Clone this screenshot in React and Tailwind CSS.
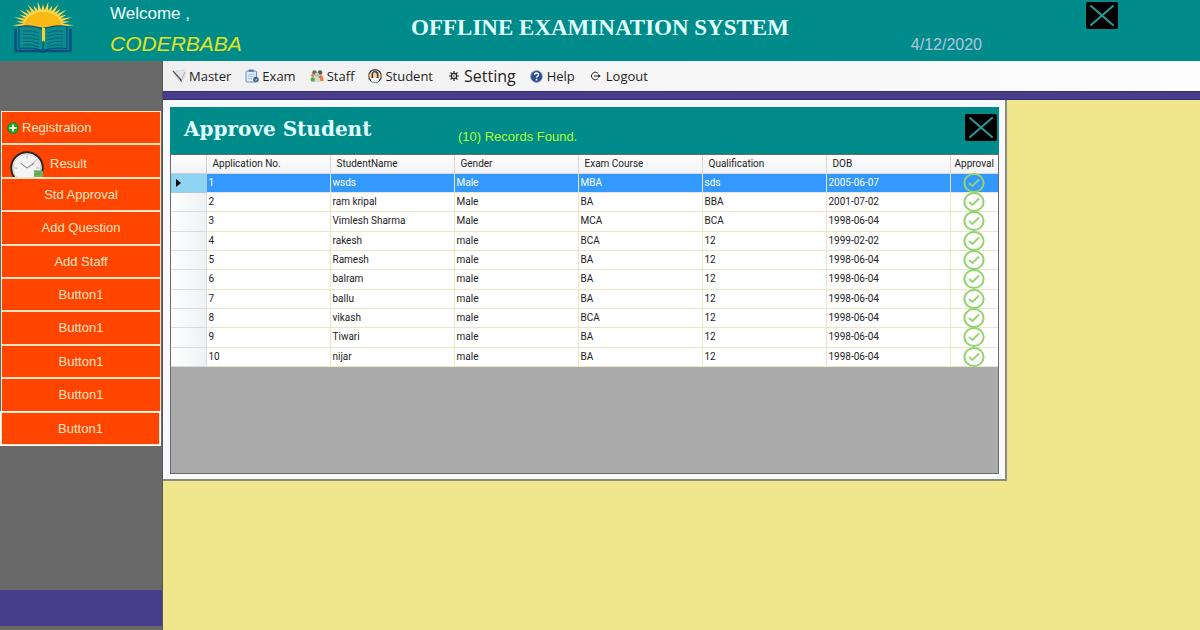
// src/App.jsx

const STUDENTS = [
  { id: 1, name: "wsds", gender: "Male", course: "MBA", qualification: "sds", dob: "2005-06-07" },
  { id: 2, name: "ram kripal", gender: "Male", course: "BA", qualification: "BBA", dob: "2001-07-02" },
  { id: 3, name: "Vimlesh Sharma", gender: "Male", course: "MCA", qualification: "BCA", dob: "1998-06-04" },
  { id: 4, name: "rakesh", gender: "male", course: "BCA", qualification: "12", dob: "1999-02-02" },
  { id: 5, name: "Ramesh", gender: "male", course: "BA", qualification: "12", dob: "1998-06-04" },
  { id: 6, name: "balram", gender: "male", course: "BA", qualification: "12", dob: "1998-06-04" },
  { id: 7, name: "ballu", gender: "male", course: "BA", qualification: "12", dob: "1998-06-04" },
  { id: 8, name: "vikash", gender: "male", course: "BCA", qualification: "12", dob: "1998-06-04" },
  { id: 9, name: "Tiwari", gender: "male", course: "BA", qualification: "12", dob: "1998-06-04" },
  { id: 10, name: "nijar", gender: "male", course: "BA", qualification: "12", dob: "1998-06-04" },
];

const COLUMNS = ["Application No.", "StudentName", "Gender", "Exam Course", "Qualification", "DOB"];

// Alternating long and short rays over the top half of the sun
const SUN_RAYS = Array.from({ length: 39 }, (_, i) => {
  const angle = Math.PI * (1.03 - (i * 1.06) / 38);
  const outer = i % 4 === 1 ? 1 : 0.88;
  const r = i % 2 ? outer : 0.62;
  return `${(31 + 31 * r * Math.cos(angle)).toFixed(1)},${(24 - 24 * r * Math.sin(angle)).toFixed(1)}`;
}).join(" ");

/* ────── Icons ────── */
function LogoIcon() {
  return (
    <svg width="62" height="52" viewBox="0 0 62 52" aria-hidden="true">
      <polygon points={SUN_RAYS} fill="#fbd54a" />
      <path d="M12 26a19 15 0 0 1 38 0z" fill="#fdb913" />
      <path d="M3.500 28v22h25q2.500 1.200 5 0h25V28" fill="#0b8793" stroke="#0b4f7d" strokeWidth="2.500" />
      <path d="M7 25.500q14-2 24 3 10-5 24-3v22q-14-1.500-24 2-10-3.500-24-2z" fill="#0c8c8c" stroke="#0b4f7d" strokeWidth="1.200" />
      <path d="M31 28v21" stroke="#0b4f7d" strokeWidth="1.200" />
      <g fill="none" stroke="#0b5f7d" strokeWidth=".9">
        <path d="M11 30q9-1 16 2M11 33.500q9-1 16 2M11 37q9-1 16 2M11 40.500q9-1 16 2M11 44q9-1 16 2" />
        <path d="M51 30q-9-1-16 2M51 33.500q-9-1-16 2M51 37q-9-1-16 2M51 40.500q-9-1-16 2M51 44q-9-1-16 2" />
      </g>
      <path d="M30 26l3 1v14l-1.500-1.500L30 41z" fill="#f5d330" />
    </svg>
  );
}

function CloseIcon() {
  return (
    <svg width="32" height="27" viewBox="0 0 32 27" aria-hidden="true">
      <path d="M5 4L27 23M27 4L5 23" stroke="#2a9a9a" strokeWidth="2" strokeLinecap="round" />
    </svg>
  );
}

function MasterIcon() {
  return (
    <svg width="14" height="14" viewBox="0 0 14 14" aria-hidden="true">
      <path d="M4 2l8-1 1 7-5 5-4-5z" fill="#e4e4e4" stroke="#bbb" strokeWidth=".6" strokeDasharray="1 1" />
      <path d="M1 2l8 9" stroke="#555" strokeWidth="1.300" />
      <path d="M9 12l4-9" stroke="#aaa" strokeWidth=".9" />
      <path d="M8 10l1.500 2.500" stroke="#222" strokeWidth="1" />
    </svg>
  );
}

function ExamIcon() {
  return (
    <svg width="14" height="14" viewBox="0 0 14 14" aria-hidden="true">
      <rect x="1" y="2" width="10.500" height="11" rx="1" fill="#dfeaf7" stroke="#6d8fbd" />
      <rect x="3.500" y=".5" width="5.500" height="2.500" rx="1" fill="#5c82b5" />
      <path d="M3 5.500h6.500M3 7.500h6.500M3 9.500h4" stroke="#a7bfdc" strokeWidth=".8" />
      <circle cx="11" cy="10.500" r="2.800" fill="#41658f" />
      <path d="M9.800 10.500l1 1 1.600-2" fill="none" stroke="#dfeaf7" strokeWidth=".8" />
    </svg>
  );
}

function StaffIcon() {
  return (
    <svg width="14" height="14" viewBox="0 0 14 14" aria-hidden="true">
      <circle cx="4.500" cy="3.500" r="2.300" fill="#6f6a4c" />
      <circle cx="10" cy="3.500" r="2.300" fill="#4f5f50" />
      <path d="M7.500 12q0-6 3-6t3 6z" fill="#ee7546" />
      <circle cx="2.800" cy="6.500" r="1.800" fill="#d98a5a" />
      <circle cx="7" cy="6" r="2.400" fill="#b9c8b5" />
      <path d="M3.500 13q0-5 3.500-5t3.500 5z" fill="#cfe0d0" />
      <circle cx="2.800" cy="10.500" r="2.200" fill="#4cae4c" />
    </svg>
  );
}

function StudentIcon() {
  return (
    <svg width="14" height="14" viewBox="0 0 14 14" aria-hidden="true">
      <circle cx="7" cy="7" r="6.300" fill="#e9e5dc" stroke="#28384d" strokeWidth="1.200" />
      <path d="M3.500 9V5.500q0-3.500 3.500-3.500t3.500 3.500V9z" fill="#4d3524" />
      <path d="M7 3.500q2 0 2 3T7 10 5 6.500t2-3z" fill="#f2cfa6" />
      <path d="M3 12q1-3.500 4-3.500t4 3.500q-4 3-8 0z" fill="#f7f7f7" />
      <path d="M1 5v4M13 5v4" stroke="#d98c32" strokeWidth="1.400" />
    </svg>
  );
}

function SettingIcon() {
  return (
    <svg width="10" height="10" viewBox="0 0 10 10" aria-hidden="true" fill="none" stroke="#222">
      <circle cx="5" cy="5" r="2.600" strokeWidth="1.100" />
      <circle cx="5" cy="5" r=".8" fill="#222" stroke="none" />
      <path d="M5 0v2M5 8v2M0 5h2M8 5h2M1.500 1.500l1.400 1.400M7.100 7.100l1.400 1.400M8.500 1.500L7.100 2.900M2.900 7.100L1.500 8.500" strokeWidth="1.200" />
    </svg>
  );
}

function HelpIcon() {
  return (
    <svg width="13" height="13" viewBox="0 0 13 13" aria-hidden="true">
      <circle cx="6.500" cy="6.500" r="5.900" fill="#2f4f8f" stroke="#8ea1c5" strokeWidth=".8" />
      <path d="M4.500 5q0-2 2-2t2 1.800q0 1-1 1.500t-1 1.500" fill="none" stroke="#fff" strokeWidth="1.400" />
      <circle cx="6.500" cy="9.700" r=".9" fill="#fff" />
    </svg>
  );
}

function LogoutIcon() {
  return (
    <svg width="11" height="10" viewBox="0 0 11 10" aria-hidden="true" fill="none" stroke="#222">
      <path d="M7.800 2.200a3.800 3.800 0 1 0 0 5.600" strokeWidth="1" />
      <path d="M4 5h5" strokeWidth="1" />
      <path d="M8.200 3l2.500 2-2.500 2z" fill="#222" stroke="none" />
    </svg>
  );
}

function PlusIcon() {
  return (
    <svg width="12" height="12" viewBox="0 0 12 12" aria-hidden="true">
      <circle cx="6" cy="6" r="5.600" fill="#21a121" stroke="#157a15" strokeWidth=".6" />
      <path d="M6 2.500v7M2.500 6h7" stroke="#f4fff0" strokeWidth="2" />
    </svg>
  );
}

function ClockIcon() {
  return (
    <svg width="34" height="26" viewBox="0 0 34 26" aria-hidden="true">
      <circle cx="17" cy="17" r="15.800" fill="#f4f4f4" stroke="#33241f" strokeWidth="2" />
      <circle cx="17" cy="17" r="13.800" fill="none" stroke="#d5d5d5" />
      <path d="M17 4.500v3M4.500 17h3M26.500 17h3" stroke="#999" strokeWidth=".8" />
      <path d="M17 17l-6-4.500M17 17l7-4.500" stroke="#666" strokeWidth=".9" />
      <path d="M17 17L27 8.500" stroke="#d99" strokeWidth=".7" />
      <rect x="24" y="20" width="9" height="6" fill="#6fb562" />
      <path d="M24 20h7M25 23h6" stroke="#57984e" />
    </svg>
  );
}

function ApproveIcon() {
  return (
    <svg width="22" height="20" viewBox="0 0 22 20" aria-hidden="true" fill="none" stroke="#92d36e">
      <ellipse cx="11" cy="10" rx="9.600" ry="9" strokeWidth="2" />
      <path d="M6 10l3.500 3L16 6.500" strokeWidth="1.800" />
    </svg>
  );
}

const MENU = [
  { label: "Master", Icon: MasterIcon },
  { label: "Exam", Icon: ExamIcon },
  { label: "Staff", Icon: StaffIcon },
  { label: "Student", Icon: StudentIcon },
  { label: "Setting", Icon: SettingIcon, large: true },
  { label: "Help", Icon: HelpIcon },
  { label: "Logout", Icon: LogoutIcon },
];

const SIDE_BUTTONS = [
  "Std Approval",
  "Add Question",
  "Add Staff",
  "Button1",
  "Button1",
  "Button1",
  "Button1",
];

function SideButton({ children, className = "justify-center" }) {
  return (
    <button
      className={`flex min-h-0 flex-1 items-center overflow-hidden border border-[#ffe4c4] bg-[#ff4500] text-[13px] text-[#ffe4c4] ${className}`}
    >
      {children}
    </button>
  );
}

function Header() {
  return (
    <header className="grid h-[61px] grid-cols-[1fr_auto_1fr] bg-[#008b8b]">
      <div className="flex gap-9 pl-3">
        <div className="pt-px">
          <LogoIcon />
        </div>
        <div className="pt-1">
          <p className="text-[17px] leading-5 text-[#f0ffff]">Welcome ,</p>
          <p className="pt-2 text-[21px] leading-6 text-[#e3e31c] italic">CODERBABA</p>
        </div>
      </div>
      <h1 className="pt-3 font-['Liberation_Serif',serif] text-[23px] leading-8 font-bold text-[#e0ffff]">
        OFFLINE EXAMINATION SYSTEM
      </h1>
      <div className="flex items-start justify-end gap-[104px] pt-[2px] pr-[82px]">
        <p className="self-end pb-[6px] text-base leading-5 text-[#b0c4de]">4/12/2020</p>
        <button aria-label="Close application" className="rounded-xs bg-black">
          <CloseIcon />
        </button>
      </div>
    </header>
  );
}

function Sidebar() {
  return (
    <aside className="flex w-[163px] shrink-0 flex-col border-r border-[#555] bg-[#696969] pt-[50px]">
      <div className="ml-px flex h-[334px] w-[160px] flex-col">
        <SideButton className="gap-[3px] pl-[5px]">
          <PlusIcon />
          Registration
        </SideButton>
        <SideButton className="gap-[6px] pl-2">
          <span className="self-end">
            <ClockIcon />
          </span>
          <span className="pt-[5px]">Result</span>
        </SideButton>
        {SIDE_BUTTONS.map((label, i) => (
          <SideButton key={i}>{label}</SideButton>
        ))}
        <SideButton className="mr-px justify-center outline-1 outline-white">Button1</SideButton>
      </div>
      <div className="mt-auto mb-1 h-9 bg-[#483d8b]" />
    </aside>
  );
}

function MenuBar() {
  return (
    <nav className="flex h-[30px] items-center gap-[13px] bg-linear-to-r from-[#f0f0f0] to-[#fdfdfd] pl-2 font-['Open_Sans',sans-serif] text-[13px] text-[#1e1e1e]">
      {MENU.map(({ label, Icon, large }) => (
        <button key={label} className="flex items-center gap-[2px]">
          <span className="flex w-4 justify-center">
            <Icon />
          </span>
          <span className={large ? "text-base leading-5" : "leading-5"}>{label}</span>
        </button>
      ))}
    </nav>
  );
}

function StudentTable() {
  return (
    <table className="h-[212px] w-full table-fixed border-collapse text-left font-['Roboto',sans-serif] text-[10px] leading-3 text-[#222]">
      <colgroup>
        <col className="w-[35px]" />
        {COLUMNS.map((c) => (
          <col key={c} />
        ))}
        <col className="w-12" />
      </colgroup>
      <thead>
        <tr className="h-[18px] bg-linear-to-b from-white to-[#f1f2f4]">
          <th className="border-r border-b border-[#cfcfcf] p-0" />
          {COLUMNS.map((c) => (
            <th key={c} className="border-r border-b border-[#d8d8d8] p-0 pl-[6px] font-normal">
              {c}
            </th>
          ))}
          <th className="border-b border-[#d8d8d8] p-0 text-center font-normal">Approval</th>
        </tr>
      </thead>
      <tbody>
        {STUDENTS.map((s, i) => (
          <tr key={s.id} className={i === 0 ? "bg-[#3399ff] text-white" : "bg-white"}>
            <td
              className={
                i === 0
                  ? "border-r border-b border-[#a9c9dd] bg-[#8fd3f3] p-0 pl-[5px]"
                  : "border-r border-b border-[#dcdcdc] bg-linear-to-r from-white to-[#eef0f3] p-0"
              }
            >
              {i === 0 && (
                <svg width="5" height="8" viewBox="0 0 5 8" aria-hidden="true">
                  <path d="M0 0l5 4-5 4z" fill="#000" />
                </svg>
              )}
            </td>
            {[s.id, s.name, s.gender, s.course, s.qualification, s.dob].map((value, c) => (
              <td key={c} className="border-r border-b border-[#ece5c8] p-0 pl-[2px]">
                {value}
              </td>
            ))}
            <td className="border-b border-[#ece5c8] p-0">
              <button aria-label={`Approve ${s.name}`} className="mx-auto -my-1 block">
                <ApproveIcon />
              </button>
            </td>
          </tr>
        ))}
      </tbody>
    </table>
  );
}

function ApproveWindow() {
  return (
    <section className="w-full max-w-[844px] border-r-2 border-b-2 border-[#8a8a80] bg-[#f7f9fd] pt-[7px] pr-[6px] pb-[5px] pl-[7px]">
      <div className="flex h-[47px] items-start bg-[#008b8b] pr-[2px]">
        <h2 className="w-[288px] pt-[6px] pl-[14px] font-['DejaVu_Serif',serif] text-xl leading-8 font-bold text-[#e0ffff]">
          Approve Student
        </h2>
        <p className="pt-5 text-[13px] leading-5 text-[#adff2f]">(10) Records Found.</p>
        <button aria-label="Close window" className="mt-[7px] ml-auto rounded-xs bg-black">
          <CloseIcon />
        </button>
      </div>
      <div className="h-80 border border-[#6a6a6a] bg-[#ababab]">
        <StudentTable />
      </div>
    </section>
  );
}

export default function App() {
  return (
    <div className="flex min-h-screen flex-col bg-[#f0e68c] font-['Liberation_Sans',sans-serif]">
      <Header />
      <div className="flex flex-1">
        <Sidebar />
        <main className="min-w-0 flex-1">
          <MenuBar />
          <div className="h-[9px] border-y border-[#372c78] bg-[#483d8b]" />
          <ApproveWindow />
        </main>
      </div>
    </div>
  );
}
